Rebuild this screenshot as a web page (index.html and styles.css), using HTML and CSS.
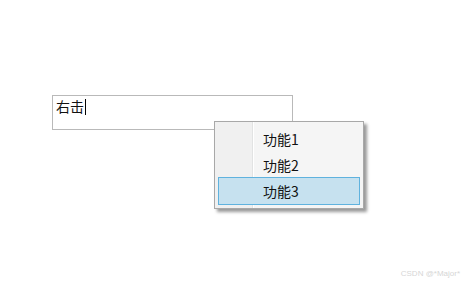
FILE: index.html
```html
<!DOCTYPE html>
<html>
<head>
<meta charset="utf-8">
<link rel="stylesheet" href="styles.css">
</head>
<body>
<div class="stage">
  <div class="textbox"><span class="value">右击</span><span class="caret"></span></div>
  <div class="menu">
    <div class="item">功能1</div>
    <div class="item">功能2</div>
    <div class="item active">功能3</div>
  </div>
  <div class="watermark">CSDN @*Major*</div>
</div>
</body>
</html>
```
FILE: styles.css
```css
html, body {
  margin: 0;
  padding: 0;
  background: #ffffff;
}
body {
  font-family: "Noto Sans CJK SC", "Noto Sans", sans-serif;
  color: #111111;
}
.stage {
  position: relative;
  width: 474px;
  height: 286px;
  padding: 95px 0 0 52px;
  box-sizing: border-box;
}
.textbox {
  width: 241px;
  height: 35px;
  box-sizing: border-box;
  border: 1px solid #b9b9b9;
  display: flex;
  align-items: flex-start;
  padding: 1px 0 0 3px;
  font-size: 14px;
  line-height: 18px;
}
.caret {
  display: inline-block;
  width: 1px;
  height: 16px;
  margin-top: 2px;
  margin-left: 1px;
  background: #000;
}
.menu {
  position: absolute;
  left: 214px;
  top: 121px;
  width: 150px;
  box-sizing: border-box;
  border: 1px solid #a8a8a8;
  padding: 3px 3px 3px 3px;
  background: linear-gradient(to right, #f0f0f0 0, #f0f0f0 37px, #e2e3e3 37px, #e2e3e3 38px, #ffffff 38px, #ffffff 39px, #f5f5f5 39px);
  box-shadow: 3px 3px 3px rgba(0, 0, 0, 0.4);
  font-size: 14px;
}
.item {
  height: 26px;
  line-height: 26px;
  padding-left: 44px;
  box-sizing: border-box;
  border: 1px solid transparent;
}
.item.active {
  height: 28px;
  line-height: 26px;
  background: #c6e1ef;
  border-color: #5fb2de;
}
.watermark {
  position: absolute;
  right: 14px;
  bottom: 8px;
  font-family: "Liberation Sans", sans-serif;
  font-size: 8px;
  color: #d6d6d6;
}
```
